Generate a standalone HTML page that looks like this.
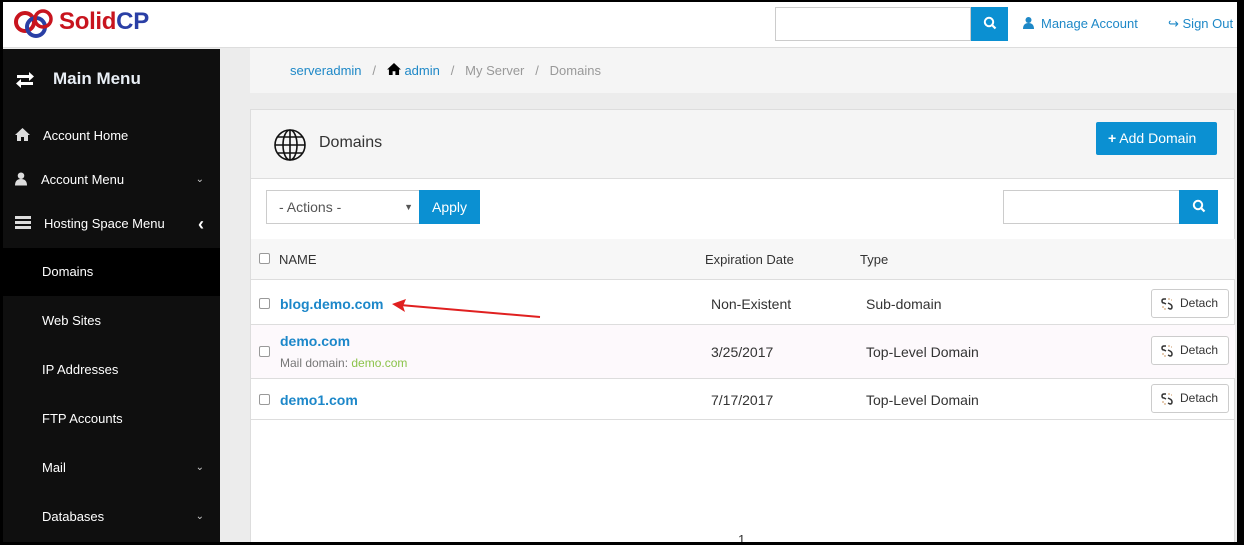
<!DOCTYPE html>
<html><head><style>
*{box-sizing:border-box;margin:0;padding:0}
body{width:1244px;height:545px;background:#000;font-family:"Liberation Sans",sans-serif;font-size:13px;color:#333;position:relative;overflow:hidden}
.frame{position:absolute;left:3px;top:2px;width:1234px;height:540px;background:#ececec;overflow:hidden}
.top{position:absolute;left:0;top:0;width:100%;height:46px;background:#fff;border-bottom:1px solid #ddd}
.side{position:absolute;left:0;top:47px;width:217px;height:500px;background:#0f0f0f;color:#fff}
.abs{position:absolute}
.blue{color:#1e88c7}
.btn{background:#0b90d2;color:#fff}
.mi{position:absolute;left:0;width:217px;height:48px;line-height:48px;font-size:13px;color:#fff}
.ic{position:absolute;left:12px;top:16px}
.chev{position:absolute;right:16px;top:0;font-size:10px;color:#ccc}
.row{position:absolute;left:248px;width:984px;border-bottom:1px solid #ddd}
.cb{position:absolute;left:8px;width:11px;height:11px;border:1px solid #999;border-radius:2px;background:#fff}
.det{position:absolute;right:6px;width:78px;height:29px;border:1px solid #ccc;border-radius:3px;background:#fff;font-size:12px;line-height:27px;padding-left:28px;color:#333}
.det svg{position:absolute;left:9px;top:7px}
.lnk{position:absolute;left:29px;font-weight:bold;font-size:14px;color:#1c87c9}
</style></head><body>
<div class="frame">
<div class="top">
 <svg class="abs" style="left:10px;top:6px" width="44" height="32" viewBox="0 0 44 32"><circle cx="12" cy="14" r="9" fill="none" stroke="#c8141e" stroke-width="4"/><circle cx="23" cy="19" r="9" fill="none" stroke="#2a3fa5" stroke-width="4"/><circle cx="30" cy="11" r="8" fill="none" stroke="#c8141e" stroke-width="3.5"/></svg>
 <div class="abs" style="left:56px;top:6px;font-size:24px;font-weight:bold;letter-spacing:-0.3px"><span style="color:#c8141e">Solid</span><span style="color:#2a3fa5">CP</span></div>
 <div class="abs" style="left:772px;top:5px;width:196px;height:34px;border:1px solid #ccc;background:#fff"></div>
 <div class="abs btn" style="left:968px;top:5px;width:37px;height:34px;text-align:center;line-height:38px"><svg width="14" height="14" viewBox="0 0 14 14"><circle cx="6" cy="6" r="4.2" fill="none" stroke="#fff" stroke-width="2"/><path d="M9 9l3.5 3.5" stroke="#fff" stroke-width="2.2"/></svg></div>
 <svg class="abs" style="left:1020px;top:15px" width="11" height="12" viewBox="0 0 11 12" fill="#1e88c7"><circle cx="5.5" cy="3" r="3"/><path d="M0 12c0-4 2-6 5.5-6s5.5 2 5.5 6z"/></svg>
 <div class="abs blue" style="left:1038px;top:14px">Manage Account</div>
 <div class="abs blue" style="left:1165px;top:14px">&#8618; Sign Out</div>
</div>
<div class="side">
 <svg class="abs" style="left:12px;top:20px" width="20" height="20" viewBox="0 0 20 20" fill="#fff"><path d="M2 6h12v-3l5 4.5-5 4.5v-3H2zM18 13H6v-3l-5 4.5 5 4.5v-3h12z"/></svg>
 <div class="abs" style="left:50px;top:20px;font-size:17px;font-weight:bold;color:#e8eef5">Main Menu</div>
 <div class="mi" style="top:63px;padding-left:40px"><svg class="ic" width="15" height="13" viewBox="0 0 15 13" fill="#ddd"><path d="M7.5 0L0 7h2v6h4V9h3v4h4V7h2z"/></svg>Account Home</div>
 <div class="mi" style="top:107px;padding-left:38px"><svg class="ic" width="12" height="14" viewBox="0 0 11 12" fill="#ddd"><circle cx="5.5" cy="3" r="3"/><path d="M0 12c0-4 2-6 5.5-6s5.5 2 5.5 6z"/></svg>Account Menu<span class="chev">&#8964;</span></div>
 <div class="mi" style="top:151px;padding-left:41px"><svg class="ic" width="16" height="13" viewBox="0 0 16 13" fill="#ddd"><rect y="0" width="16" height="3"/><rect y="5" width="16" height="3"/><rect y="10" width="16" height="3"/></svg>Hosting Space Menu<span class="chev" style="font-size:18px;color:#fff;font-weight:bold">&#8249;</span></div>
 <div class="mi" style="top:199px;padding-left:39px;background:#000">Domains</div>
 <div class="mi" style="top:248px;padding-left:39px">Web Sites</div>
 <div class="mi" style="top:297px;padding-left:39px">IP Addresses</div>
 <div class="mi" style="top:346px;padding-left:39px">FTP Accounts</div>
 <div class="mi" style="top:395px;padding-left:39px">Mail<span class="chev">&#8964;</span></div>
 <div class="mi" style="top:444px;padding-left:39px">Databases<span class="chev">&#8964;</span></div>
</div>
<div class="abs" style="left:247px;top:46px;width:988px;height:45px;background:#f5f5f5"></div>
<div class="abs" style="left:287px;top:61px;color:#999"><span class="blue">serveradmin</span>&nbsp;&nbsp; / &nbsp;&nbsp;<svg width="14" height="12" viewBox="0 0 15 13" fill="#000"><path d="M7.5 0L0 7h2v6h4V9h3v4h4V7h2z"/></svg> <span class="blue">admin</span>&nbsp;&nbsp; / &nbsp;&nbsp;My Server&nbsp;&nbsp; / &nbsp;&nbsp;Domains</div>
<div class="abs" style="left:247px;top:107px;width:985px;height:440px;background:#fff;border:1px solid #ddd"></div>
<div class="abs" style="left:248px;top:108px;width:983px;height:69px;background:#f5f5f5;border-bottom:1px solid #ddd"></div>
<svg class="abs" style="left:270px;top:126px" width="34" height="34" viewBox="0 0 34 34" fill="none" stroke="#111" stroke-width="1.6"><circle cx="17" cy="17" r="15"/><ellipse cx="17" cy="17" rx="7" ry="15"/><path d="M17 2v30M2 17h30M5 9h24M5 25h24"/></svg>
<div class="abs" style="left:316px;top:132px;font-size:16px">Domains</div>
<div class="abs btn" style="left:1093px;top:120px;width:121px;height:33px;border-radius:2px;line-height:33px;font-size:14px;padding-left:12px"><b>+</b> Add Domain</div>
<div class="abs" style="left:263px;top:188px;width:154px;height:34px;border:1px solid #ccc;background:#fff;font-size:14px;line-height:32px;padding-left:12px;color:#555">- Actions -<span style="position:absolute;right:6px;font-size:9px">&#9660;</span></div>
<div class="abs btn" style="left:416px;top:188px;width:61px;height:34px;line-height:34px;text-align:center;font-size:14px">Apply</div>
<div class="abs" style="left:1000px;top:188px;width:177px;height:34px;border:1px solid #ccc;background:#fff"></div>
<div class="abs btn" style="left:1176px;top:188px;width:39px;height:34px;text-align:center;line-height:38px"><svg width="14" height="14" viewBox="0 0 14 14"><circle cx="6" cy="6" r="4.2" fill="none" stroke="#fff" stroke-width="2"/><path d="M9 9l3.5 3.5" stroke="#fff" stroke-width="2.2"/></svg></div>
<div class="row" style="top:237px;height:41px;background:#f7f7f7;border-bottom:1px solid #ddd"><div class="cb" style="top:14px"></div><div class="abs" style="left:28px;top:13px">NAME</div><div class="abs" style="left:454px;top:13px">Expiration Date</div><div class="abs" style="left:609px;top:13px">Type</div></div>
<div class="row" style="top:281px;height:42px"><div class="cb" style="top:15px"></div><div class="lnk" style="top:13px">blog.demo.com</div><div class="abs" style="left:460px;top:13px;font-size:14px">Non-Existent</div><div class="abs" style="left:615px;top:13px;font-size:14px">Sub-domain</div><div class="det" style="top:6px"><svg width="12" height="13" viewBox="0 0 12 13" fill="none" stroke="#333" stroke-width="1.5"><path d="M5 2L3 2Q1 2 1 4Q1 6 3 6L5 7M7 6L9 7Q11 8 11 10Q11 12 9 12L7 11"/><path d="M8 1v2M10 3h1M1 10h2M4 11v2" stroke="#c96" stroke-width="1"/></svg>Detach</div></div>
<div class="row" style="top:323px;height:54px;background:#fdf9fc"><div class="cb" style="top:21px"></div><div class="lnk" style="top:8px">demo.com</div><div class="abs" style="left:29px;top:31px;font-size:12px;color:#777">Mail domain: <span style="color:#8bc34a">demo.com</span></div><div class="abs" style="left:460px;top:19px;font-size:14px">3/25/2017</div><div class="abs" style="left:615px;top:19px;font-size:14px">Top-Level Domain</div><div class="det" style="top:11px"><svg width="12" height="13" viewBox="0 0 12 13" fill="none" stroke="#333" stroke-width="1.5"><path d="M5 2L3 2Q1 2 1 4Q1 6 3 6L5 7M7 6L9 7Q11 8 11 10Q11 12 9 12L7 11"/><path d="M8 1v2M10 3h1M1 10h2M4 11v2" stroke="#c96" stroke-width="1"/></svg>Detach</div></div>
<div class="row" style="top:377px;height:41px"><div class="cb" style="top:15px"></div><div class="lnk" style="top:13px">demo1.com</div><div class="abs" style="left:460px;top:13px;font-size:14px">7/17/2017</div><div class="abs" style="left:615px;top:13px;font-size:14px">Top-Level Domain</div><div class="det" style="top:5px"><svg width="12" height="13" viewBox="0 0 12 13" fill="none" stroke="#333" stroke-width="1.5"><path d="M5 2L3 2Q1 2 1 4Q1 6 3 6L5 7M7 6L9 7Q11 8 11 10Q11 12 9 12L7 11"/><path d="M8 1v2M10 3h1M1 10h2M4 11v2" stroke="#c96" stroke-width="1"/></svg>Detach</div></div>
<svg class="abs" style="left:385px;top:295px" width="160" height="25"><path d="M152 20L12 8" stroke="#e02020" stroke-width="2"/><path d="M4 7l14-5-3 7 2 6z" fill="#e02020"/></svg>
<div class="abs" style="left:735px;top:530px;font-size:13px">1</div>
</div>
</body></html>
